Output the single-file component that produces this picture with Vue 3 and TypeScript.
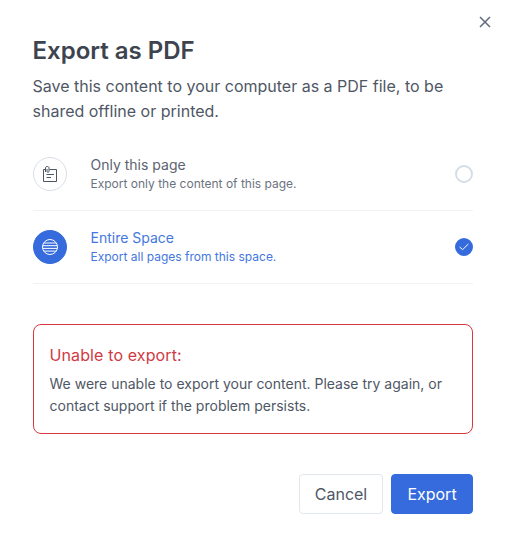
<script setup lang="ts">
const options = [
  { id: 'page', title: 'Only this page', desc: 'Export only the content of this page.', active: false },
  { id: 'space', title: 'Entire Space', desc: 'Export all pages from this space.', active: true },
];
</script>

<template>
  <div class="dialog">
    <button class="close" aria-label="Close">
      <svg width="12" height="12" viewBox="0 0 12 12"><path d="M1 1L11 11M11 1L1 11" stroke="#5f6b7a" stroke-width="1.5" fill="none" /></svg>
    </button>
    <h1 class="title">Export as PDF</h1>
    <p class="lead">Save this content to your computer as a PDF file, to be shared offline or printed.</p>
    <div class="options">
      <div v-for="o in options" :key="o.id" class="option" :class="{ active: o.active }">
        <div class="icon">
          <svg v-if="!o.active" width="16" height="16" viewBox="0 0 16 16" fill="none" stroke="#4a5565" stroke-width="1">
            <path d="M3.5 3.5H1.5V15.5H14.5V3.5H7.5" />
            <path d="M3.5 6V1.5C3.5 0.2 7 0.2 7 1.5V5.5C7 6.6 5 6.6 5 5.5V3" />
            <path d="M4.5 8.5H12M4.5 11.5H9" />
          </svg>
          <svg v-else width="18" height="18" viewBox="0 0 18 18" fill="none" stroke="#fff" stroke-width="1">
            <circle cx="9" cy="9" r="7.5" />
            <path d="M3 5H15M1.8 7.7H16.2M1.8 10.4H16.2M3 13.1H15" />
          </svg>
        </div>
        <div class="text">
          <div class="opt-title">{{ o.title }}</div>
          <div class="opt-desc">{{ o.desc }}</div>
        </div>
        <div class="radio">
          <svg v-if="o.active" width="10" height="8" viewBox="0 0 10 8" fill="none"><path d="M0.6 4L3.6 6.6L9.4 1" stroke="#fff" stroke-width="1" /></svg>
        </div>
      </div>
    </div>
    <div class="error">
      <div class="err-title">Unable to export:</div>
      <p class="err-text">We were unable to export your content. Please try again, or contact support if the problem persists.</p>
    </div>
    <div class="actions">
      <button class="btn cancel">Cancel</button>
      <button class="btn export">Export</button>
    </div>
  </div>
</template>

<style>
html, body { margin: 0; background: #fff; }
</style>

<style scoped>
.dialog {
  position: relative;
  box-sizing: border-box;
  width: 505px;
  height: 543px;
  padding: 36px 32px 0 32.5px;
  font-family: Inter, sans-serif;
  background: #fff;
  color: #3f4752;
}
.close {
  position: absolute;
  top: 16px;
  right: 14px;
  width: 12px;
  height: 12px;
  padding: 0;
  border: 0;
  background: none;
  display: flex;
}
.title {
  margin: 0;
  font-size: 24px;
  line-height: 29px;
  font-weight: 600;
  color: #3d444f;
}
.lead {
  margin: 9px 0 0;
  font-size: 16px;
  line-height: 25px;
  color: #4f5765;
}
.options { margin-top: 14px; }
.option {
  display: flex;
  align-items: center;
  height: 73px;
  box-sizing: border-box;
  border-bottom: 1px solid #f0f2f5;
}
.icon {
  width: 34px;
  height: 34px;
  box-sizing: border-box;
  border-radius: 50%;
  border: 1px solid #d8dfe6;
  display: flex;
  align-items: center;
  justify-content: center;
  margin-right: 24px;
}
.active .icon { background: #356bdc; border-color: #356bdc; }
.text { flex: 1; }
.opt-title { font-size: 14px; line-height: 19px; color: #5c6370; }
.opt-desc { font-size: 12px; line-height: 18px; margin-top: 1px; color: #6b7380; }
.active .opt-title, .active .opt-desc { color: #4477e0; }
.radio {
  width: 18px;
  height: 18px;
  box-sizing: border-box;
  border-radius: 50%;
  border: 2px solid #d5dde5;
  display: flex;
  align-items: center;
  justify-content: center;
}
.active .radio { background: #356bdc; border-color: #356bdc; }
.error {
  margin-top: 40px;
  height: 110px;
  box-sizing: border-box;
  border: 1px solid #d9383f;
  border-radius: 8px;
  padding: 20px 16px 0;
}
.err-title { font-size: 16px; line-height: 20px; font-weight: 400; letter-spacing: 0.12px; color: #cf3b44; }
.err-text { margin: 8px 0 0; font-size: 14px; line-height: 22px; color: #4f5765; }
.actions {
  margin-top: 40px;
  display: flex;
  justify-content: flex-end;
  gap: 8px;
}
.btn {
  height: 40px;
  box-sizing: border-box;
  border-radius: 4px;
  font-family: Inter, sans-serif;
  font-size: 16px;
  padding: 0;
}
.cancel { width: 84px; background: #fff; border: 1px solid #e2e7ee; color: #4f5765; }
.export { width: 82px; background: #356bdc; border: 1px solid #356bdc; color: #fff; }
</style>
